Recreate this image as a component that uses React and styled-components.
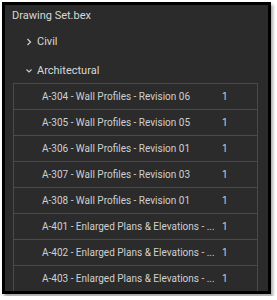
import styled, { createGlobalStyle } from "styled-components"

const GlobalStyle = createGlobalStyle`
  body {
    margin: 0;
    background: #ffffff;
    font-family: Roboto, "Liberation Sans", sans-serif;
  }
`

const Panel = styled.div`
  box-sizing: border-box;
  width: 269px;
  height: 292px;
  margin: 2px;
  border: 3px solid #000;
  background: #2b2b2b;
  box-shadow: 2px 3px 3px rgba(0, 0, 0, 0.35);
  overflow: hidden;
  display: flex;
  flex-direction: column;
`

const Title = styled.div`
  height: 22px;
  line-height: 22px;
  padding-left: 7px;
  font-size: 11px;
  color: #d8d8d8;
`

const TreeLabel = styled.div`
  display: flex;
  align-items: center;
  gap: 5px;
  height: 24px;
  padding: 3px 0 0 21px;
  margin-bottom: ${(p) => (p.$open ? "1px" : "3px")};
  font-size: 11px;
  color: #d8d8d8;
`

const Chevron = styled.svg`
  width: 6px;
  height: 8px;
  flex-shrink: 0;
`

const List = styled.div`
  margin: 0 10px 0 8px;
  border: 1px solid #4a4a4a;
  border-bottom: none;
`

const Row = styled.div`
  display: grid;
  grid-template-columns: 178px 1fr;
  height: 25px;
  line-height: 25px;
  padding-left: 28px;
  border-bottom: 1px solid #4a4a4a;
  font-size: 10px;
  color: #d0d0d0;
  &:last-child {
    border-bottom: none;
  }
`

const SheetName = styled.span`
  white-space: nowrap;
`

const Count = styled.span`
  padding-left: 2px;
`

const sheets = [
  "A-304 - Wall Profiles - Revision 06",
  "A-305 - Wall Profiles - Revision 05",
  "A-306 - Wall Profiles - Revision 01",
  "A-307 - Wall Profiles - Revision 03",
  "A-308 - Wall Profiles - Revision 01",
  "A-401 - Enlarged Plans & Elevations - ...",
  "A-402 - Enlarged Plans & Elevations - ...",
  "A-403 - Enlarged Plans & Elevations - ...",
]

const ChevronRight = () => (
  <Chevron viewBox="0 0 6 8">
    <path d="M1.5 1 L4.5 4 L1.5 7" fill="none" stroke="#cfcfcf" strokeWidth="1.2" />
  </Chevron>
)

const ChevronDown = () => (
  <Chevron viewBox="0 0 6 8">
    <path d="M0.5 2.5 L3 5 L5.5 2.5" fill="none" stroke="#cfcfcf" strokeWidth="1.1" />
  </Chevron>
)

const App = () => {
  return (
    <>
      <GlobalStyle />
      <Panel>
        <Title>Drawing Set.bex</Title>
        <TreeLabel>
          <ChevronRight />
          Civil
        </TreeLabel>
        <TreeLabel $open>
          <ChevronDown />
          Architectural
        </TreeLabel>
        <List>
          {sheets.map((name) => (
            <Row key={name}>
              <SheetName>{name}</SheetName>
              <Count>1</Count>
            </Row>
          ))}
        </List>
      </Panel>
    </>
  )
}

export default App
